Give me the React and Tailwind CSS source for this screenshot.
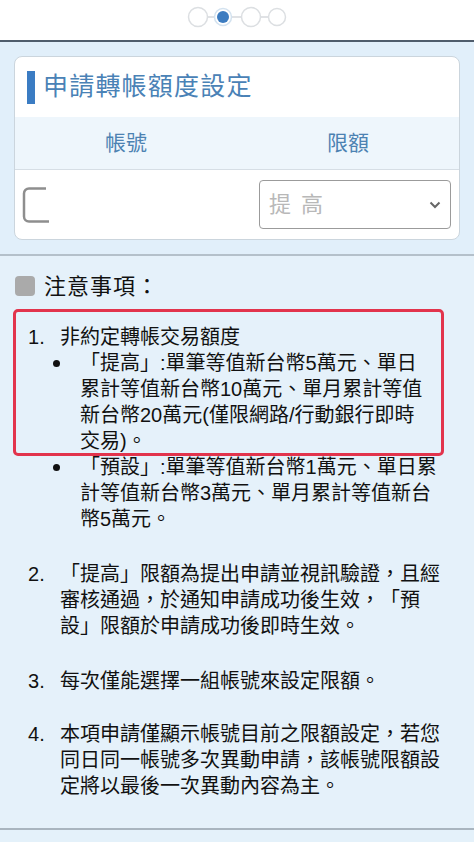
import React from 'react';

const font = { fontFamily: '"Liberation Sans", "Noto Sans CJK TC", sans-serif' };

const Stepper = () => (
    <svg width="104" height="26" viewBox="0 0 104 26">
        <line x1="19" y1="13" x2="28" y2="13" stroke="#d6d9dc" strokeWidth="1.5" />
        <line x1="45" y1="13" x2="55" y2="13" stroke="#d6d9dc" strokeWidth="1.5" />
        <line x1="73" y1="13" x2="82" y2="13" stroke="#d6d9dc" strokeWidth="1.5" />
        <circle cx="11" cy="13" r="9.5" fill="#fff" stroke="#dcdfe2" strokeWidth="1.5" />
        <circle cx="36" cy="13" r="8.5" fill="#fff" stroke="#d3e2ef" strokeWidth="1.5" />
        <circle cx="36" cy="13" r="6" fill="#3d7cc0" />
        <circle cx="64" cy="13" r="9.5" fill="#fff" stroke="#dcdfe2" strokeWidth="1.5" />
        <circle cx="90" cy="13" r="8.5" fill="#fff" stroke="#dcdfe2" strokeWidth="1.5" />
    </svg>
);

const Item = ({ n, children, className = '' }) => (
    <div className={`flex ${className}`}>
        <span className="w-[32px] shrink-0">{n}.</span>
        <div className="whitespace-nowrap">{children}</div>
    </div>
);

const Bullet = ({ children }) => (
    <div className="flex -ml-[7px]">
        <span className="w-[27px] shrink-0 flex justify-start">
            <span className="mt-[10px] w-[7px] h-[7px] rounded-full bg-[#111]" />
        </span>
        <div className="whitespace-nowrap">{children}</div>
    </div>
);

export default function App() {
    return (
        <div className="w-[474px] h-[842px] overflow-hidden bg-[#e4f1fa] [text-spacing-trim:space-all]" style={font}>
            {/* top stepper */}
            <div className="h-[42px] bg-white flex justify-center pt-[4px] pl-[4px] border-b-2 border-[#4f5d6c]">
                <Stepper />
            </div>

            {/* form section */}
            <div className="bg-[#e1effa] px-[14px] pt-[14px] pb-[14px] border-b-2 border-[#b4c0ca]">
                <div className="bg-white rounded-[8px] border border-[#cbd5dd] overflow-hidden">
                    <div className="h-[60px] flex items-center pl-[12px]">
                        <span className="w-[8px] h-[33px] bg-[#3b7cc3]" />
                        <span className="ml-[8px] text-[25px] text-[#4a82b6] tracking-[1.2px]">申請轉帳額度設定</span>
                    </div>
                    <div className="h-[53px] grid grid-cols-2 items-center bg-[#eef6fc] border-b border-[#d6dee5] text-[21px] text-[#4c82b2] text-center">
                        <span>帳號</span>
                        <span>限額</span>
                    </div>
                    <div className="h-[69px] flex items-center justify-between pl-[7px] pr-[8px]">
                        <svg width="28" height="38" viewBox="0 0 28 38">
                            <path d="M24 2.5 H7 a5 5 0 0 0 -5 5 V30.5 a5 5 0 0 0 5 5 H27" fill="none" stroke="#8e8e8e" strokeWidth="2.5" />
                        </svg>
                        <div className="w-[192px] h-[49px] rounded-[4px] border-[1.5px] border-[#9b9b9b] flex items-center justify-between pl-[9px] pr-[9px]">
                            <span className="text-[22px] text-[#b8b8b8] tracking-[2px]">提 高</span>
                            <svg width="12" height="8" viewBox="0 0 12 8">
                                <path d="M1.5 1.5 L6 6 L10.5 1.5" fill="none" stroke="#666" strokeWidth="2" />
                            </svg>
                        </div>
                    </div>
                </div>
            </div>

            {/* notes */}
            <div className="relative bg-[#e5f1fa] pt-[15px] pb-[29px] border-b-2 border-[#a9b5bf] text-[#111]">
                <div className="flex items-center h-[30px] pl-[15px]">
                    <span className="w-[20px] h-[20px] rounded-[4px] bg-[#aaaaaa]" />
                    <span className="ml-[9px] text-[22px] tracking-[1px]">注意事項：</span>
                </div>

                <div className="mt-[23px] pl-[28px] text-[20px] leading-[26px]">
                    <Item n="1">
                        非約定轉帳交易額度
                        <Bullet>
                            「提高」:單筆等值新台幣5萬元、單日<br />
                            累計等值新台幣10萬元、單月累計等值<br />
                            新台幣20萬元(僅限網路/行動銀行即時<br />
                            交易)。
                        </Bullet>
                        <Bullet>
                            「預設」:單筆等值新台幣1萬元、單日累<br />
                            計等值新台幣3萬元、單月累計等值新台<br />
                            幣5萬元。
                        </Bullet>
                    </Item>
                    <Item n="2" className="mt-[29px]">
                        「提高」限額為提出申請並視訊驗證，且經<br />
                        審核通過，於通知申請成功後生效，「預<br />
                        設」限額於申請成功後即時生效。
                    </Item>
                    <Item n="3" className="mt-[29px]">
                        每次僅能選擇一組帳號來設定限額。
                    </Item>
                    <Item n="4" className="mt-[27px]">
                        本項申請僅顯示帳號目前之限額設定，若您<br />
                        同日同一帳號多次異動申請，該帳號限額設<br />
                        定將以最後一次異動內容為主。
                    </Item>
                </div>

                {/* red highlight */}
                <div className="absolute left-[13px] top-[53px] w-[431px] h-[147px] rounded-[5px] border-[3px] border-[#e2344c]" />
            </div>
        </div>
    );
}
